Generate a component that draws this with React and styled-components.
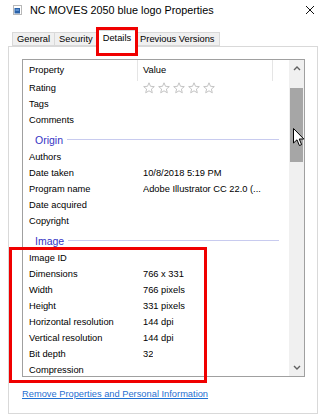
import React from 'react';
import styled, { createGlobalStyle } from 'styled-components';

const Global = createGlobalStyle`
  html, body { margin: 0; padding: 0; background: #fff; }
`;

const Window = styled.div`
  position: relative;
  width: 320px;
  height: 418px;
  background: #fff;
  display: flex;
  flex-direction: column;
  overflow: hidden;
  font-family: "Liberation Sans", Arial, sans-serif;
  font-size: 9.3px;
  color: #000;
`;

const TitleBar = styled.div`
  height: 20px;
  display: flex;
  align-items: center;
  padding: 0 5px 0 13px;
  font-size: 10.8px;
`;

const Title = styled.span`
  flex: 1;
  margin-left: 8px;
`;

const TabStrip = styled.div`
  height: 26px;
  display: flex;
  align-items: flex-end;
  padding-left: 12px;
  position: relative;
  z-index: 1;
`;

const Tab = styled.div`
  box-sizing: border-box;
  height: ${p => (p.$active ? '17px' : '14px')};
  margin-bottom: ${p => (p.$active ? '-1px' : '0')};
  padding: ${p => (p.$active ? '2px 5px 0' : '1px 4px 0')};
  margin-left: ${p => (p.$active ? '-1px' : '0')};
  margin-right: ${p => (p.$active ? '-1px' : '0')};
  border: 1px solid #d9d9d9;
  border-bottom: ${p => (p.$active ? 'none' : '1px solid #d9d9d9')};
  border-left: ${p => (p.$first || p.$active ? '1px solid #d9d9d9' : 'none')};
  background: ${p => (p.$active ? '#fff' : '#f0f0f0')};
  line-height: 11px;
  white-space: nowrap;
`;

const Panel = styled.div`
  box-sizing: border-box;
  width: 310px;
  height: 368px;
  margin-left: 8px;
  border: 1px solid #d9d9d9;
  padding: 12px 0 0 13px;
`;

const ListBox = styled.div`
  box-sizing: border-box;
  width: 283px;
  height: 318px;
  border: 1px solid #a0a0a0;
  display: flex;
`;

const Content = styled.div`
  flex: 1;
  overflow: hidden;
`;

const HeaderRow = styled.div`
  display: flex;
  height: 20px;
`;

const HeaderCell = styled.div`
  box-sizing: border-box;
  width: ${p => p.$w}px;
  padding: 5px 0 0 ${p => p.$pad}px;
  border-right: ${p => (p.$last ? 'none' : '1px solid #e5e5e5')};
  height: 21px;
`;

const Row = styled.div`
  display: flex;
  height: 16px;
  line-height: 16px;
  white-space: nowrap;
`;

const Name = styled.div`
  width: 114px;
  padding-left: 6px;
  flex-shrink: 0;
`;

const Value = styled.div`
  display: flex;
  align-items: center;
  overflow: hidden;
`;

const Group = styled.div`
  display: flex;
  align-items: center;
  height: 21px;
  padding: 2px 10px 0 12px;
  box-sizing: border-box;
  color: #3434c4;
  font-size: 10.5px;
`;

const GroupLine = styled.div`
  flex: 1;
  height: 1px;
  background: #c8cbef;
  margin-left: 4px;
`;

const Stars = styled.div`
  display: flex;
  gap: 3px;
`;

const Scrollbar = styled.div`
  width: 15px;
  background: #f0f0f0;
  display: flex;
  flex-direction: column;
`;

const ScrollButton = styled.div`
  height: 17px;
  display: flex;
  align-items: center;
  justify-content: center;
`;

const Track = styled.div`
  flex: 1;
  padding: 11px 1px 0;
`;

const Thumb = styled.div`
  height: 74px;
  background: #a6a6a6;
`;

const LinkText = styled.a`
  display: inline-block;
  margin-top: 12px;
  color: #1f6fd1;
  text-decoration: underline;
  font-size: 9.3px;
`;

const Mark = styled.div`
  position: absolute;
  box-sizing: border-box;
  left: ${p => p.$x}px;
  top: ${p => p.$y}px;
  width: ${p => p.$w}px;
  height: ${p => p.$h}px;
  border: 3px solid #f00000;
  z-index: 5;
`;

const Pointer = styled.svg`
  position: absolute;
  left: 293px;
  top: 128px;
  z-index: 6;
`;

const FileIcon = () => (
  <svg width="9" height="10" viewBox="0 0 9 10">
    <rect x="0.5" y="0.5" width="8" height="9" fill="#fff" stroke="#b8b8b8" />
    <rect x="1.5" y="3" width="5.5" height="5.5" fill="#2a62a8" />
    <rect x="2.5" y="4" width="3.5" height="2" fill="#5b8fd0" />
  </svg>
);

const CloseIcon = () => (
  <svg width="10" height="10" viewBox="0 0 10 10">
    <path d="M1 1 L9 9 M9 1 L1 9" stroke="#111" strokeWidth="1" />
  </svg>
);

const Star = () => (
  <svg width="12" height="12" viewBox="0 0 12 12">
    <path
      d="M6 0.8 L7.5 4.3 L11.3 4.6 L8.4 7.1 L9.3 10.8 L6 8.8 L2.7 10.8 L3.6 7.1 L0.7 4.6 L4.5 4.3 Z"
      fill="#fff"
      stroke="#bdbdbd"
      strokeWidth="0.9"
    />
  </svg>
);

const Chevron = ({ down }) => (
  <svg width="8" height="5" viewBox="0 0 8 5">
    <path
      d={down ? 'M1 1 L4 4 L7 1' : 'M1 4 L4 1 L7 4'}
      fill="none"
      stroke="#606060"
      strokeWidth="1.4"
    />
  </svg>
);

const origin = [
  ['Authors', ''],
  ['Date taken', '10/8/2018 5:19 PM'],
  ['Program name', 'Adobe Illustrator CC 22.0 (...'],
  ['Date acquired', ''],
  ['Copyright', ''],
];

const image = [
  ['Image ID', ''],
  ['Dimensions', '766 x 331'],
  ['Width', '766 pixels'],
  ['Height', '331 pixels'],
  ['Horizontal resolution', '144 dpi'],
  ['Vertical resolution', '144 dpi'],
  ['Bit depth', '32'],
  ['Compression', ''],
];

const PropRow = ({ name, value }) => (
  <Row>
    <Name>{name}</Name>
    <Value>{value}</Value>
  </Row>
);

export default function App() {
  return (
    <Window>
      <Global />
      <TitleBar>
        <FileIcon />
        <Title>NC MOVES 2050 blue logo Properties</Title>
        <CloseIcon />
      </TitleBar>
      <TabStrip>
        <Tab $first>General</Tab>
        <Tab>Security</Tab>
        <Tab $active>Details</Tab>
        <Tab>Previous Versions</Tab>
      </TabStrip>
      <Panel>
        <ListBox>
          <Content>
            <HeaderRow>
              <HeaderCell $w={115} $pad={6}>Property</HeaderCell>
              <HeaderCell $w={135} $pad={5}>Value</HeaderCell>
              <HeaderCell $w={16} $last />
            </HeaderRow>
            <Row>
              <Name>Rating</Name>
              <Value>
                <Stars>
                  <Star /><Star /><Star /><Star /><Star />
                </Stars>
              </Value>
            </Row>
            <PropRow name="Tags" value="" />
            <PropRow name="Comments" value="" />
            <Group>Origin<GroupLine /></Group>
            {origin.map(([n, v]) => <PropRow key={n} name={n} value={v} />)}
            <Group>Image<GroupLine /></Group>
            {image.map(([n, v]) => <PropRow key={n} name={n} value={v} />)}
          </Content>
          <Scrollbar>
            <ScrollButton><Chevron /></ScrollButton>
            <Track><Thumb /></Track>
            <ScrollButton><Chevron down /></ScrollButton>
          </Scrollbar>
        </ListBox>
        <LinkText>Remove Properties and Personal Information</LinkText>
      </Panel>
      <Mark $x={96} $y={27} $w={42} $h={29} />
      <Mark $x={9} $y={247} $w={198} $h={136} />
      <Pointer width="12" height="19" viewBox="0 0 12 19">
        <path
          d="M0.5 0.5 L0.5 15 L4 11.8 L6.4 17.5 L8.6 16.6 L6.2 11 L10.8 11 Z"
          fill="#fff"
          stroke="#000"
          strokeWidth="1"
          strokeLinejoin="round"
        />
      </Pointer>
    </Window>
  );
}
